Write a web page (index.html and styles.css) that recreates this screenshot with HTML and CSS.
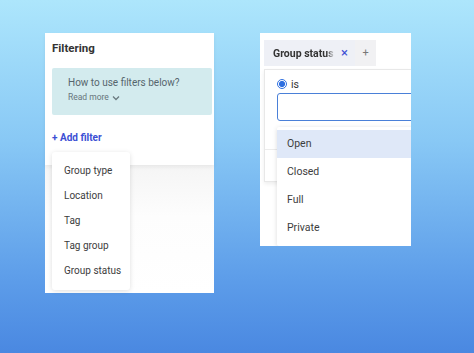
FILE: index.html
```html
<!DOCTYPE html>
<html>
<head>
	<meta charset="utf-8">
	<title>Filtering</title>
	<link rel="stylesheet" href="styles.css">
</head>
<body>
	<div class="stage">

		<div class="filter-panel">
			<div class="filter-card">
				<h2 class="title">Filtering</h2>
				<div class="info">
					<div class="info-text">How to use filters below?</div>
					<div class="read-more">Read more
						<svg width="8" height="6" viewBox="0 0 8 6"><path d="M1 1.5 L4 4.5 L7 1.5" fill="none" stroke="#6b7a80" stroke-width="1.3"/></svg>
					</div>
				</div>
				<div class="add-filter">+ Add filter</div>
			</div>
			<div class="panel-rest"></div>

			<ul class="menu">
				<li>Group type</li>
				<li>Location</li>
				<li>Tag</li>
				<li>Tag group</li>
				<li>Group status</li>
			</ul>
		</div>

		<div class="status-panel">
			<div class="tabs">
				<div class="tab">
					<span class="tab-label">Group status</span>
					<span class="tab-close">&times;</span>
				</div>
				<div class="tab-add">+</div>
			</div>
			<div class="status-card">
				<label class="radio-row"><span class="radio"></span>is</label>
				<div class="text-input"></div>
				<div class="card-foot"></div>
			</div>

			<ul class="options">
				<li class="active">Open</li>
				<li>Closed</li>
				<li>Full</li>
				<li>Private</li>
			</ul>
		</div>

	</div>
</body>
</html>
```

FILE: styles.css
```css
html, body {
  margin: 0;
  padding: 0;
}

body {
  width: 474px;
  height: 353px;
  overflow: hidden;
  font-family: Roboto, "Noto Sans", sans-serif;
  background: linear-gradient(180deg, #ade6fc 0%, #88c8f5 40%, #5c9ce9 80%, #4a88e1 100%);
}

.stage {
  display: flex;
  align-items: flex-start;
  gap: 46px;
  padding: 33px 0 0 45px;
}

ul {
  list-style: none;
  margin: 0;
  padding: 0;
}

/* left panel */
.filter-panel {
  position: relative;
  width: 169px;
  height: 260px;
  background: #fff;
  display: flex;
  flex-direction: column;
}

.filter-card {
  height: 132px;
  box-sizing: border-box;
  padding: 8px 2px 0 7px;
  background: #fff;
  box-shadow: 0 2px 4px rgba(0, 0, 0, 0.06);
  position: relative;
  z-index: 1;
}

.title {
  margin: 0;
  font-size: 11.5px;
  line-height: 14px;
  font-weight: 700;
  color: #333;
}

.info {
  margin-top: 13px;
  height: 47px;
  box-sizing: border-box;
  padding: 9px 0 0 16px;
  background: #d3ebee;
  border-radius: 2px;
}

.info-text {
  font-size: 10px;
  line-height: 12px;
  color: #56666d;
}

.read-more {
  margin-top: 3px;
  font-size: 8.5px;
  line-height: 11px;
  color: #66757b;
  display: flex;
  align-items: center;
  gap: 3px;
}

.add-filter {
  margin-top: 17px;
  font-size: 10px;
  line-height: 12px;
  font-weight: 700;
  color: #3c4fd4;
}

.panel-rest {
  flex: 1;
  background: linear-gradient(180deg, #f5f5f5 0%, #fdfdfd 40%, #fff 100%);
}

.menu {
  position: absolute;
  left: 7px;
  top: 119px;
  z-index: 2;
  width: 78px;
  height: 138px;
  box-sizing: border-box;
  padding-top: 6px;
  background: #fff;
  border-radius: 3px;
  box-shadow: 0 1px 5px rgba(0, 0, 0, 0.13);
}

.menu li {
  height: 25px;
  line-height: 25px;
  padding-left: 12px;
  font-size: 10px;
  color: #3d3d3d;
}

/* right panel */
.status-panel {
  position: relative;
  width: 151px;
  height: 213px;
  box-sizing: border-box;
  padding: 7px 0 0 4px;
  background: #fff;
  overflow: hidden;
}

.tabs {
  display: flex;
  height: 26px;
}

.tab {
  width: 91px;
  box-sizing: border-box;
  padding-left: 9px;
  display: flex;
  align-items: center;
  background: #eef0f6;
}

.tab-label {
  width: 62px;
  margin-right: 6px;
  overflow: hidden;
  white-space: nowrap;
  font-size: 10.5px;
  font-weight: 700;
  color: #333;
  -webkit-mask-image: linear-gradient(90deg, #000 86%, transparent 100%);
}

.tab-close {
  font-size: 13px;
  line-height: 12px;
  color: #3c4fd4;
}

.tab-add {
  width: 21px;
  background: #f1f1f3;
  color: #777;
  font-size: 11px;
  line-height: 26px;
  text-align: center;
}

.status-card {
  margin-top: 3px;
  height: 113px;
  box-sizing: border-box;
  padding: 8px 0 0 12px;
  border: 1px solid #e8e8e8;
  border-right: none;
  box-shadow: 0 2px 4px rgba(0, 0, 0, 0.07);
}

.radio-row {
  display: flex;
  align-items: center;
  gap: 4px;
  height: 12px;
  font-size: 10.5px;
  color: #333;
}

.radio {
  width: 8px;
  height: 8px;
  border-radius: 50%;
  border: 1px solid #2e6fe0;
  background: radial-gradient(circle, #2e6fe0 0 2.8px, #fff 3.2px);
}

.text-input {
  margin-top: 3px;
  height: 28px;
  width: 200px;
  box-sizing: border-box;
  border: 1.5px solid #4a80d8;
  border-radius: 3px;
}

.card-foot {
  margin: 28px 0 0 -12px;
  border-top: 1px solid #ececec;
}

.options {
  position: absolute;
  left: 17px;
  top: 94px;
  width: 200px;
  height: 119px;
  box-sizing: border-box;
  padding-top: 3px;
  background: #fff;
  border-radius: 2px;
  box-shadow: 0 1px 5px rgba(0, 0, 0, 0.14);
}

.options li {
  height: 28px;
  line-height: 28px;
  padding-left: 10px;
  font-size: 10.5px;
  color: #3d3d3d;
}

.options li.active {
  background: #dfe8f8;
}
```
